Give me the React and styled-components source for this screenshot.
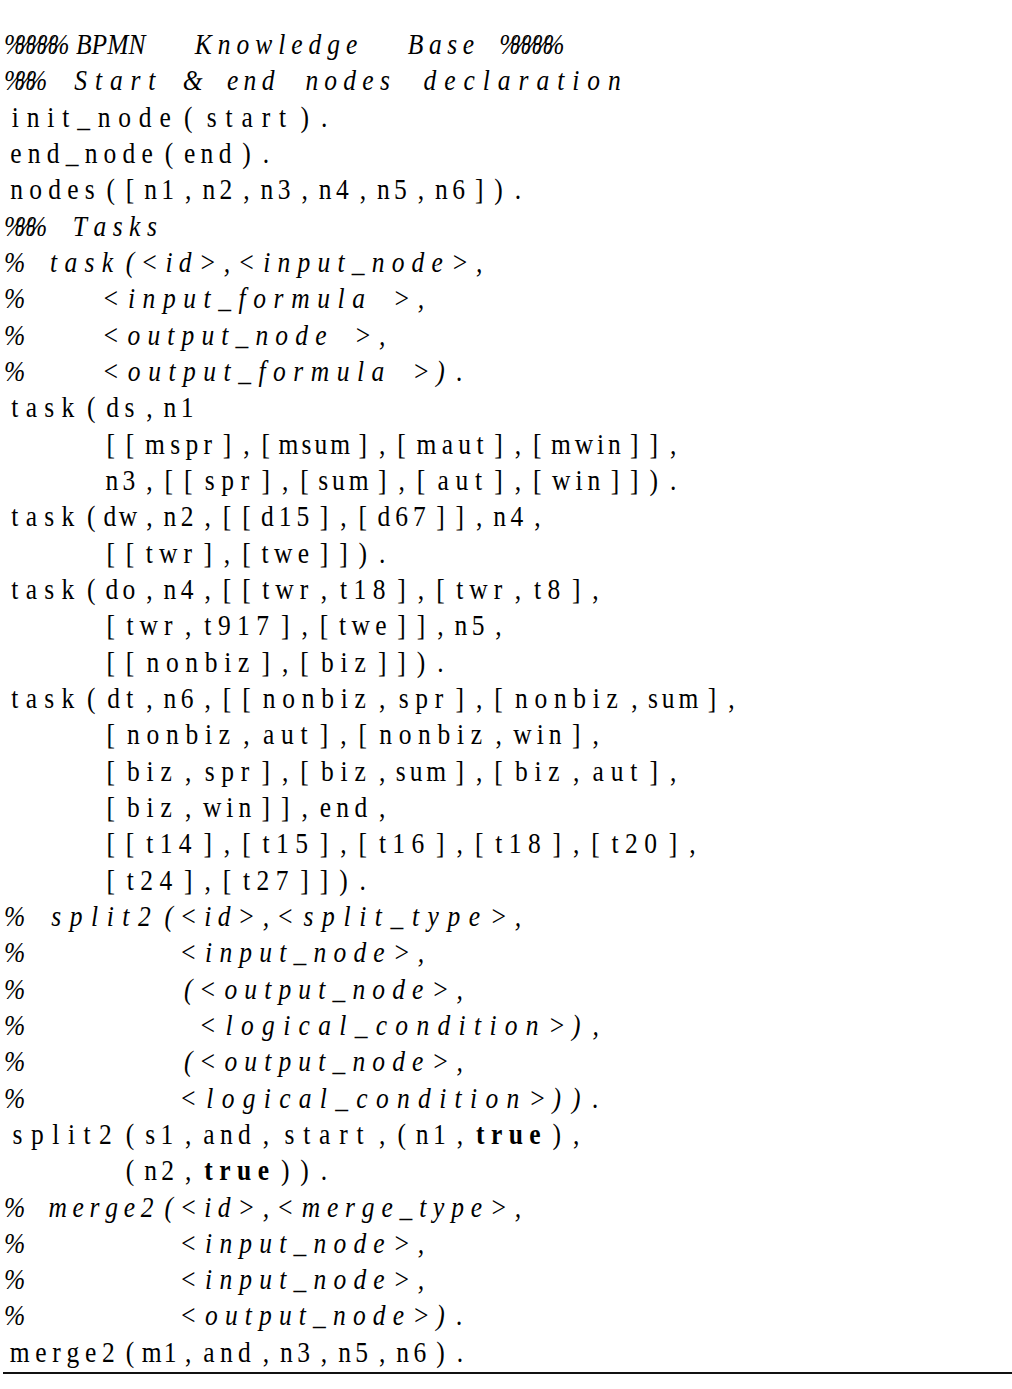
import React from 'react';
import styled, { createGlobalStyle } from 'styled-components';

// fixed-column listing: every token takes one column per character and its
// letters are spread evenly inside that box, like LaTeX listings does
const SCALE = 0.85;
const COL = 19.4;
const CELL = COL / SCALE;

const GlobalStyle = createGlobalStyle`
  html, body {
    margin: 0;
    padding: 0;
    background: #fff;
  }
  body {
    font-family: "Liberation Serif", "Times New Roman", serif;
    color: #000;
  }
`;

const Listing = styled.div`
  margin-left: 3px;
  padding: 26px 0 2px;
  border-bottom: 2px solid #111;
`;

const Row = styled.div`
  display: flex;
  height: 36.33px;
  line-height: 36.33px;
  font-size: 30px;
  padding-left: 1px;
  white-space: pre;
`;

const Code = styled.span`
  display: inline-flex;
  transform: scaleX(${SCALE});
  transform-origin: 0 50%;
`;

const Token = styled.span`
  display: inline-flex;
  justify-content: space-evenly;
  width: ${p => p.$cols * CELL}px;
  font-style: ${p => (p.$kind === 'i' ? 'italic' : 'normal')};
  font-weight: ${p => (p.$kind === 'b' ? 700 : 400)};
`;

// runs typeset tight, outside the columns (the %%% banners, BPMN)
const Tight = styled.span`
  display: inline-block;
  width: ${p => p.$w / SCALE}px;
  font-style: italic;
  letter-spacing: ${p => p.$ls}em;
`;

const lines = [
  [{ tight: '%%%%%', w: 72, ls: -0.4 }, { tight: 'BPMN', w: 74, ls: 0 }, { t: '  Knowledge  Base ', s: 'i' }, { tight: '%%%%%', w: 70, ls: -0.4 }],
  [{ tight: '%%%', w: 43, ls: -0.4 }, { t: ' Start & end nodes declaration', s: 'i' }],
  [{ t: 'init_node(start).', s: 'r' }],
  [{ t: 'end_node(end).', s: 'r' }],
  [{ t: 'nodes([n1,n2,n3,n4,n5,n6]).', s: 'r' }],
  [{ tight: '%%%', w: 43, ls: -0.4 }, { t: ' Tasks', s: 'i' }],
  [{ t: '% task(<id>,<input_node>,', s: 'i' }],
  [{ t: '%    <input_formula >,', s: 'i' }],
  [{ t: '%    <output_node >,', s: 'i' }],
  [{ t: '%    <output_formula >).', s: 'i' }],
  [{ t: 'task(ds,n1', s: 'r' }],
  [{ t: '     [[mspr],[msum],[maut],[mwin]],', s: 'r' }],
  [{ t: '     n3,[[spr],[sum],[aut],[win]]).', s: 'r' }],
  [{ t: 'task(dw,n2,[[d15],[d67]],n4,', s: 'r' }],
  [{ t: '     [[twr],[twe]]).', s: 'r' }],
  [{ t: 'task(do,n4,[[twr,t18],[twr,t8],', s: 'r' }],
  [{ t: '     [twr,t917],[twe]],n5,', s: 'r' }],
  [{ t: '     [[nonbiz],[biz]]).', s: 'r' }],
  [{ t: 'task(dt,n6,[[nonbiz,spr],[nonbiz,sum],', s: 'r' }],
  [{ t: '     [nonbiz,aut],[nonbiz,win],', s: 'r' }],
  [{ t: '     [biz,spr],[biz,sum],[biz,aut],', s: 'r' }],
  [{ t: '     [biz,win]],end,', s: 'r' }],
  [{ t: '     [[t14],[t15],[t16],[t18],[t20],', s: 'r' }],
  [{ t: '     [t24],[t27]]).', s: 'r' }],
  [{ t: '% split2(<id>,<split_type>,', s: 'i' }],
  [{ t: '%        <input_node>,', s: 'i' }],
  [{ t: '%        (<output_node>,', s: 'i' }],
  [{ t: '%         <logical_condition>),', s: 'i' }],
  [{ t: '%        (<output_node>,', s: 'i' }],
  [{ t: '%        <logical_condition>)).', s: 'i' }],
  [{ t: 'split2(s1,and,start,(n1,', s: 'r' }, { t: 'true', s: 'b' }, { t: '),', s: 'r' }],
  [{ t: '      (n2,', s: 'r' }, { t: 'true', s: 'b' }, { t: ')).', s: 'r' }],
  [{ t: '% merge2(<id>,<merge_type>,', s: 'i' }],
  [{ t: '%        <input_node>,', s: 'i' }],
  [{ t: '%        <input_node>,', s: 'i' }],
  [{ t: '%        <output_node>).', s: 'i' }],
  [{ t: 'merge2(m1,and,n3,n5,n6).', s: 'r' }],
];

// identifiers and numbers stay together, every other character is its own token
const tokenize = text => text.match(/[A-Za-z0-9_]+|[^A-Za-z0-9_]/g) || [];

function CodeLine({ parts }) {
  return (
    <Row>
      <Code>
        {parts.map((part, i) =>
          part.tight ? (
            <Tight key={i} $w={part.w} $ls={part.ls}>{part.tight}</Tight>
          ) : (
            tokenize(part.t).map((tok, j) => (
              <Token key={`${i}-${j}`} $cols={tok.length} $kind={part.s}>
                {[...tok].map((ch, k) => <span key={k}>{ch}</span>)}
              </Token>
            ))
          )
        )}
      </Code>
    </Row>
  );
}

export default function App() {
  return (
    <>
      <GlobalStyle />
      <Listing>
        {lines.map((parts, i) => (
          <CodeLine key={i} parts={parts} />
        ))}
      </Listing>
    </>
  );
}
